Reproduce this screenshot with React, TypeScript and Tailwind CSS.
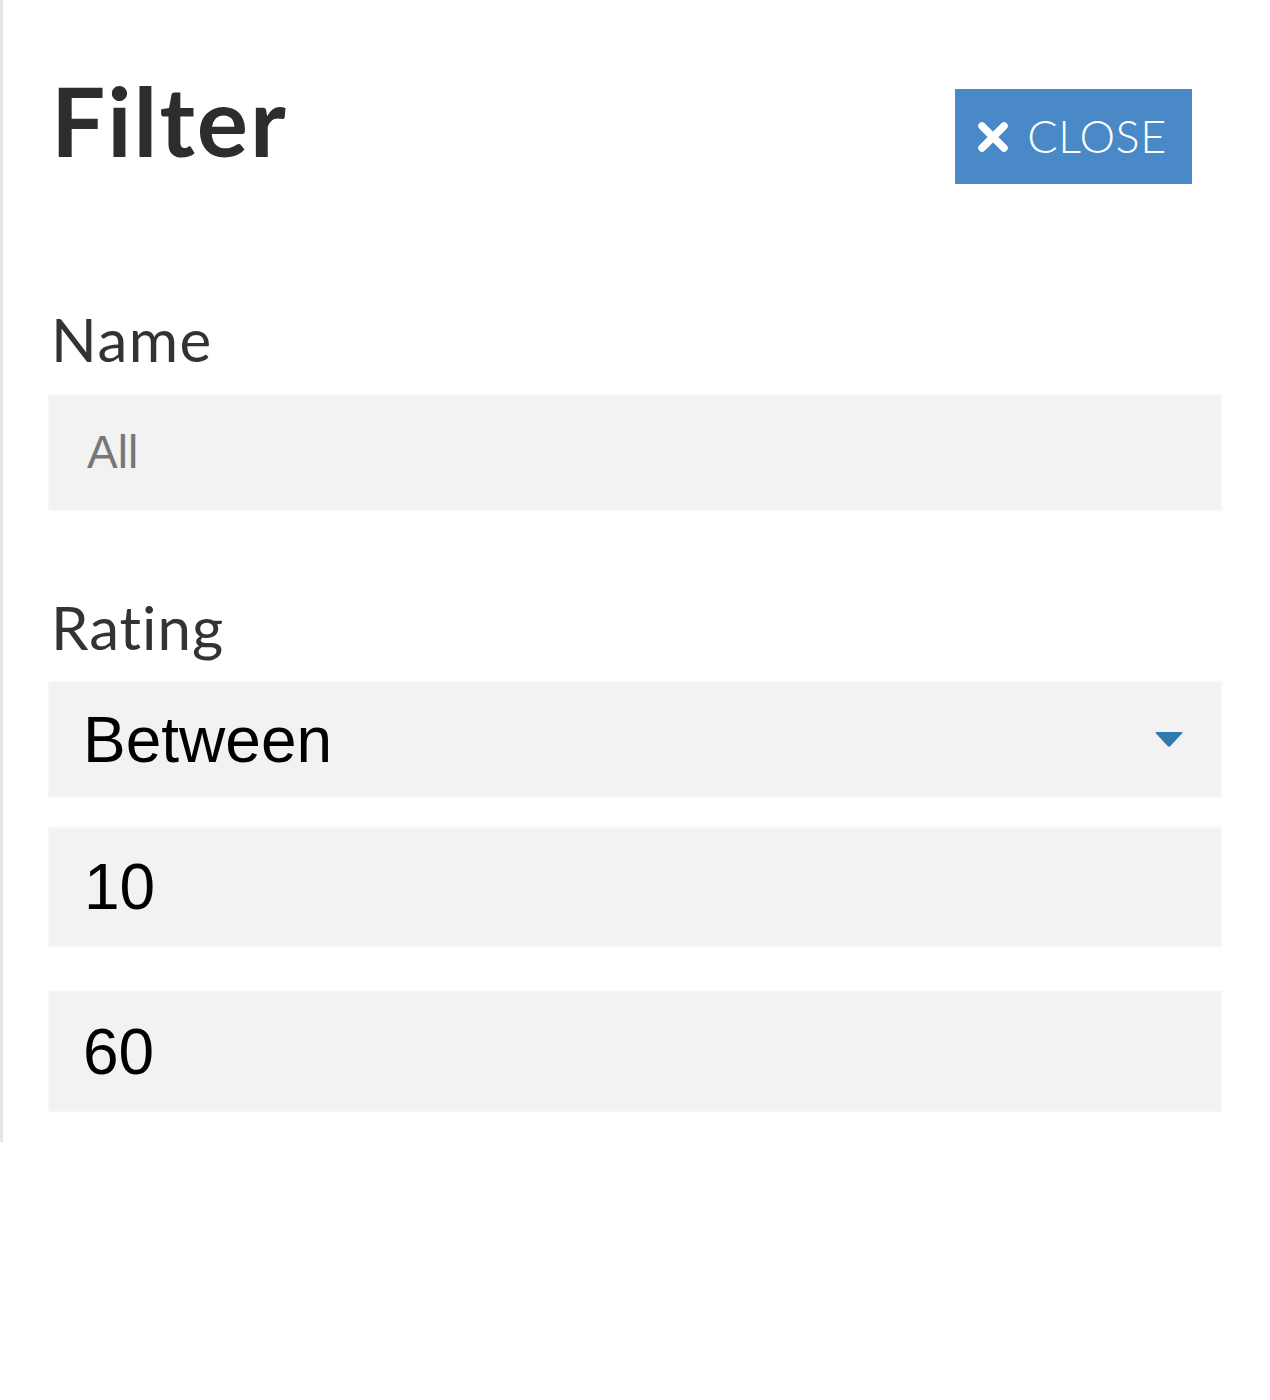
import { useState } from 'react'

const labelFont = "font-['Lato','Noto_Sans',sans-serif] [font-variant-ligatures:none]"
const fieldFont = "font-['Liberation_Sans','Arial',sans-serif]"

function CloseIcon() {
  return (
    <svg width="30" height="30" viewBox="0 0 30 30" className="shrink-0">
      <path
        d="M4 4 L26 26 M26 4 L4 26"
        stroke="white"
        strokeWidth="7.5"
        strokeLinecap="round"
        fill="none"
      />
    </svg>
  )
}

function Caret() {
  return (
    <svg width="30" height="17" viewBox="0 0 30 17" className="shrink-0">
      <path
        d="M2.5 1 H27.5 Q29.5 1 28 2.6 L16.4 15 Q15 16.4 13.6 15 L2 2.6 Q0.5 1 2.5 1 Z"
        fill="#3279b0"
      />
    </svg>
  )
}

export default function App() {
  const [low, setLow] = useState('10')
  const [high, setHigh] = useState('60')

  return (
    <div className="min-h-[1400px] w-full bg-white">
      <div className="flex flex-col border-l-[3px] border-[#e6e6e6] pb-[30px] pl-[45px] pr-[48px]">
        <div className="flex items-start justify-between">
          <h1
            className={`${labelFont} ml-[3px] mt-[72px] text-[96px] font-bold leading-[96px] tracking-[2px] text-[#2d2d2d]`}
          >
            Filter
          </h1>
          <button className="mr-[30px] mt-[89px] flex h-[95px] w-[237px] items-center justify-center gap-[19px] bg-[#4a89c7] pr-[2px] text-white">
            <CloseIcon />
            <span
              className={`${labelFont} text-[45px] font-light leading-none tracking-[0.5px]`}
            >
              CLOSE
            </span>
          </button>
        </div>

        <label
          className={`${labelFont} ml-[3px] mt-[125px] text-[60px] leading-[60px] tracking-[1.5px] text-[#333333]`}
        >
          Name
        </label>
        <div className="mt-[25px] flex h-[117px] items-center border-2 border-[#f6f6f6] bg-[#f2f2f2] pl-[37px]">
          <input
            placeholder="All"
            className={`${fieldFont} w-full bg-transparent text-[46px] text-black outline-none placeholder:text-[#777777]`}
          />
        </div>

        <label
          className={`${labelFont} ml-[3px] mt-[86px] text-[60px] leading-[60px] tracking-[1px] text-[#333333]`}
        >
          Rating
        </label>
        <div className="mt-[24px] flex h-[117px] items-center justify-between border-2 border-[#f6f6f6] bg-[#f2f2f2] pl-[33px] pr-[36px]">
          <span className={`${fieldFont} text-[64px] leading-none text-black`}>
            Between
          </span>
          <Caret />
        </div>

        <div className="mt-[29px] flex h-[120px] items-center border-2 border-[#f6f6f6] bg-[#f2f2f2] pl-[34px]">
          <input
            value={low}
            onChange={(e) => setLow(e.target.value)}
            className={`${fieldFont} w-full bg-transparent text-[64px] text-black outline-none`}
          />
        </div>

        <div className="mt-[44px] flex h-[121px] items-center border-2 border-[#f6f6f6] bg-[#f2f2f2] pl-[33px]">
          <input
            value={high}
            onChange={(e) => setHigh(e.target.value)}
            className={`${fieldFont} w-full bg-transparent text-[64px] text-black outline-none`}
          />
        </div>
      </div>
    </div>
  )
}
